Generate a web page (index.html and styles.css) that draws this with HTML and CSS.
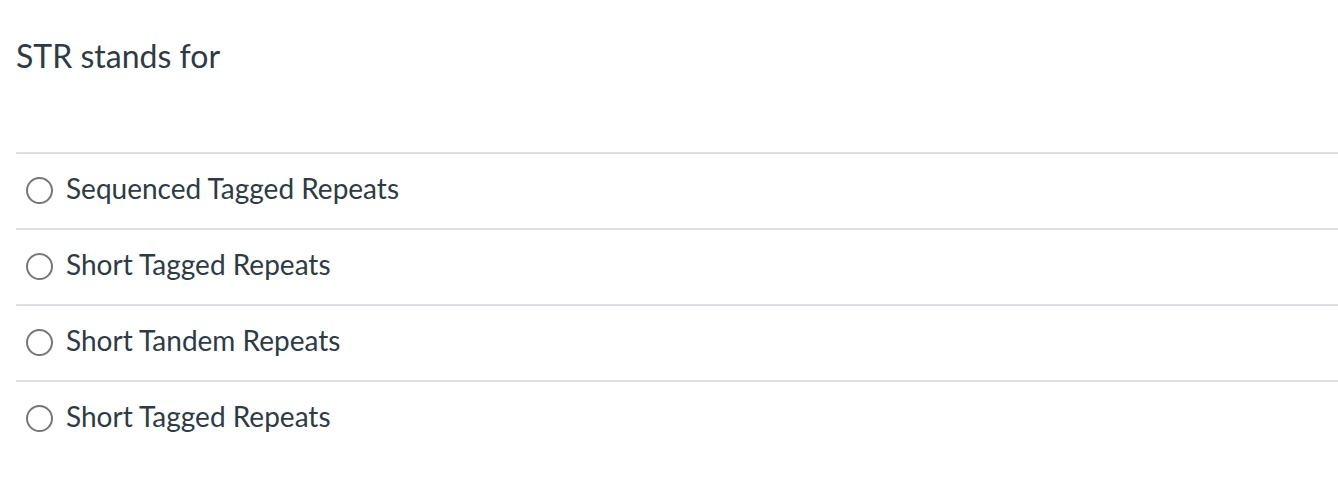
FILE: index.html
```html
<!DOCTYPE html>
<html>
<head>
<meta charset="utf-8">
<link rel="stylesheet" href="styles.css">
</head>
<body>
<div class="quiz">
  <div class="question">STR stands for</div>
  <div class="answers">
    <div class="answer"><span class="radio"></span><span class="label">Sequenced Tagged Repeats</span></div>
    <div class="answer"><span class="radio"></span><span class="label">Short Tagged Repeats</span></div>
    <div class="answer"><span class="radio"></span><span class="label">Short Tandem Repeats</span></div>
    <div class="answer"><span class="radio"></span><span class="label">Short Tagged Repeats</span></div>
  </div>
</div>
</body>
</html>
```
FILE: styles.css
```css
html, body {
  margin: 0;
  padding: 0;
  background: #ffffff;
}
body {
  font-family: Lato, "Liberation Sans", sans-serif;
  color: #2d3b45;
}
.quiz {
  padding-left: 16px;
}
.question {
  box-sizing: border-box;
  font-size: 32px;
  line-height: 36px;
  padding-top: 38px;
  height: 152px;
}
.answers {
  display: flex;
  flex-direction: column;
}
.answer {
  box-sizing: border-box;
  height: 76px;
  padding-bottom: 2px;
  border-top: 2px solid #dcdfe2;
  display: flex;
  align-items: center;
  font-size: 28px;
}
.radio {
  width: 23px;
  height: 23px;
  border: 2px solid #767676;
  border-radius: 50%;
  margin-left: 10px;
  margin-right: 13px;
  flex: none;
}
.label {
  line-height: 32px;
  margin-bottom: 5px;
}
```
